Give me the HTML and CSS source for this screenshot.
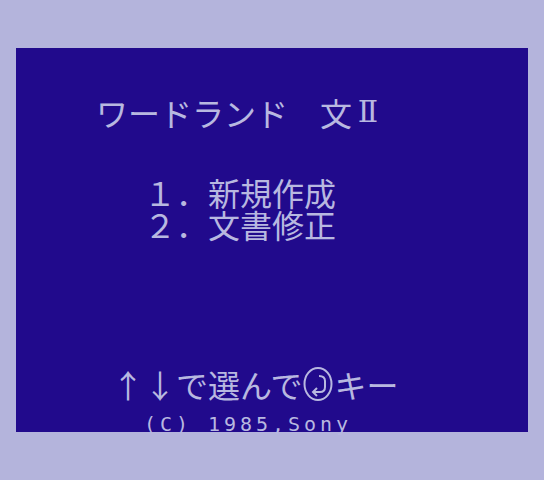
FILE: index.html
```html
<!DOCTYPE html>
<html lang="ja">
<head>
<meta charset="utf-8">
<title>ワードランド 文Ⅱ</title>
<link rel="stylesheet" href="styles.css">
</head>
<body>
<div class="screen">
  <div class="title">ワードランド　文<span class="cell roman">Ⅱ</span></div>
  <div class="menu">
    <div class="item">１．新規作成</div>
    <div class="item">２．文書修正</div>
  </div>
  <div class="hint"><span class="cell">↑</span><span class="cell">↓</span>で選んで<span class="cell"><svg class="ret" viewBox="0 0 32 34" width="32" height="34"><ellipse cx="16" cy="17" rx="13.5" ry="16" fill="none" stroke="currentColor" stroke-width="2"/><path d="M17 9 C21 9 23 11 23 14 V20 C23 23 21 25 18 25 H11" fill="none" stroke="currentColor" stroke-width="2"/><path d="M15 21 L11 25 L15 29" fill="none" stroke="currentColor" stroke-width="2"/></svg></span>キー</div>
  <div class="copy">(C) 1985,Sony</div>
</div>
</body>
</html>
```
FILE: styles.css
```css
html, body {
  margin: 0;
  padding: 0;
}
body {
  background: #b4b4dc;
  width: 544px;
  height: 480px;
  overflow: hidden;
  padding-top: 48px;
  box-sizing: border-box;
}
.screen {
  margin: 0 16px;
  width: 512px;
  height: 384px;
  background: #210a8c;
  color: #b8b8e0;
  font-family: "Noto Sans CJK JP", "Noto Sans", sans-serif;
  font-weight: normal;
  font-size: 32px;
  line-height: 32px;
  padding-top: 48px;
  box-sizing: border-box;
  display: flex;
  flex-direction: column;
}
.title {
  height: 32px;
  padding-left: 80px;
  white-space: nowrap;
  display: flex;
  align-items: center;
}
.roman {
  font-family: "DejaVu Serif", "Liberation Serif", serif;
  font-size: 30px;
}
.menu {
  margin-top: 48px;
  padding-left: 128px;
  display: flex;
  flex-direction: column;
}
.item {
  height: 32px;
  white-space: nowrap;
}
.hint {
  margin-top: 128px;
  height: 32px;
  padding-left: 96px;
  white-space: nowrap;
  display: flex;
  align-items: center;
}
.cell {
  display: inline-flex;
  width: 32px;
  height: 32px;
  justify-content: center;
  align-items: center;
}
.ret {
  display: block;
}
.copy {
  margin-top: 16px;
  height: 16px;
  padding-left: 128px;
  font-family: "DejaVu Sans Mono", monospace;
  font-weight: normal;
  font-size: 20px;
  line-height: 16px;
  letter-spacing: 3.96px;
  white-space: nowrap;
}
```
